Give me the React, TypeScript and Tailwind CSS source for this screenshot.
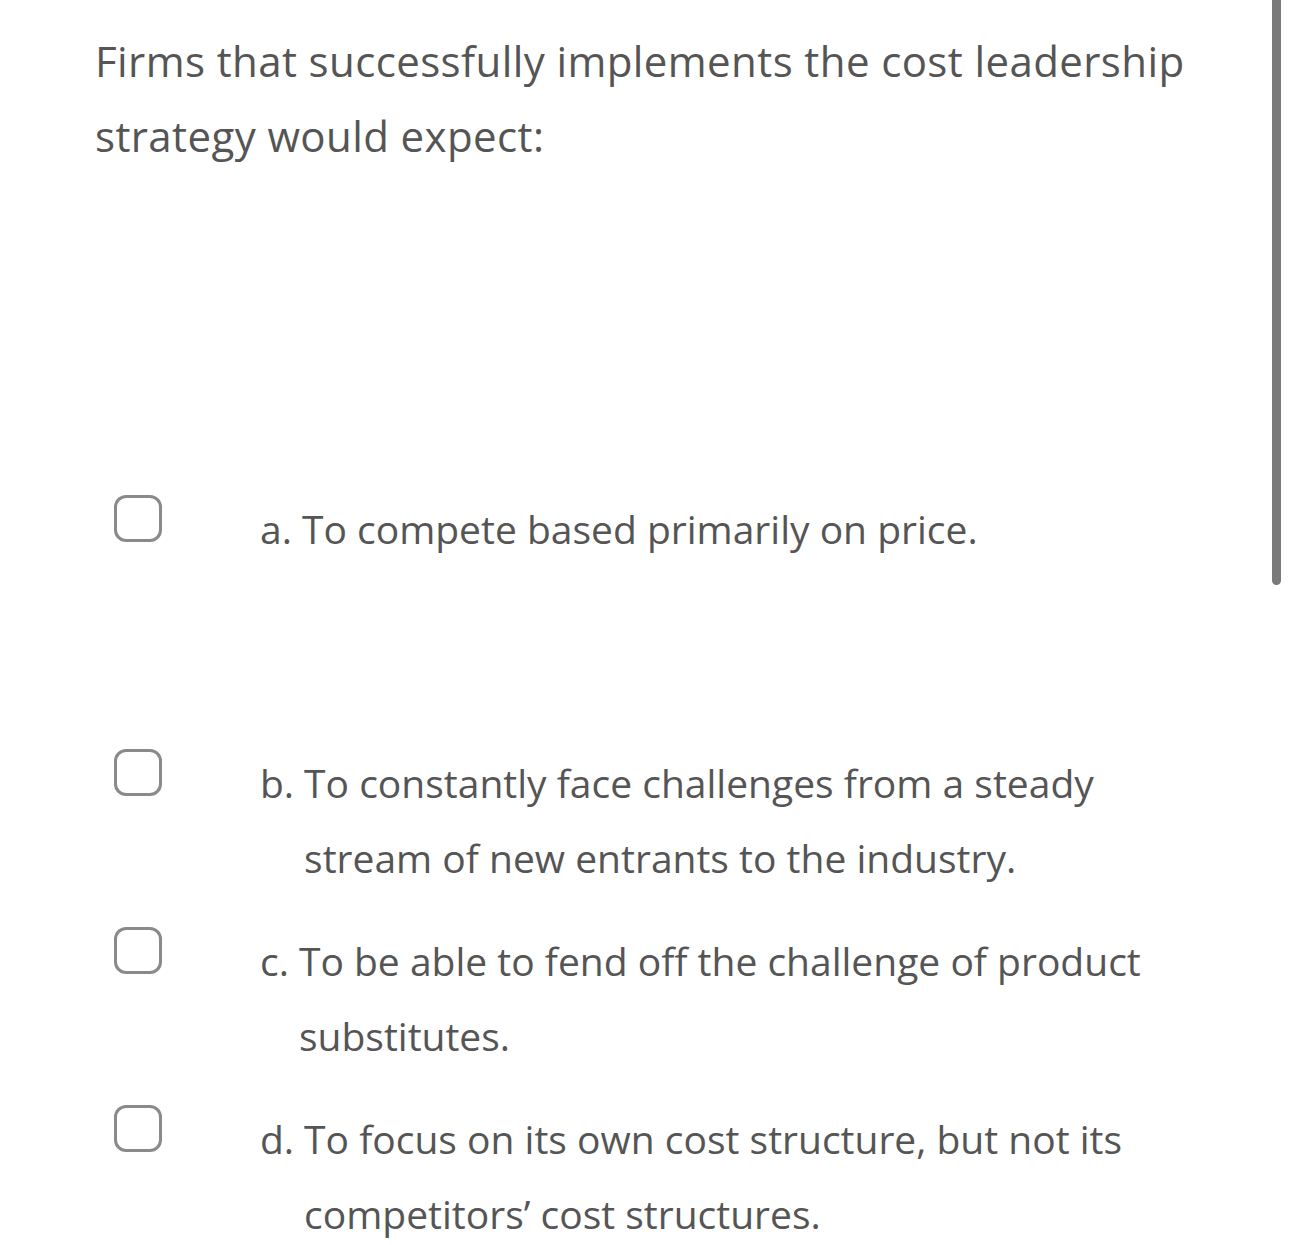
import React from "react";

const options = [
  { label: "a.", text: "To compete based primarily on price." },
  { label: "b.", text: "To constantly face challenges from a steady stream of new entrants to the industry." },
  { label: "c.", text: "To be able to fend off the challenge of product substitutes." },
  { label: "d.", text: "To focus on its own cost structure, but not its competitors’ cost structures." },
];

const Checkbox: React.FC = () => (
  <div className="mt-[4px] h-[47px] w-[48px] shrink-0 rounded-[12px] border-[3.5px] border-[#8a8a8c] bg-white" />
);

export default function App() {
  return (
    <div
      className="relative h-[1245px] w-[1290px] overflow-hidden bg-white text-[#555555]"
      style={{ fontFamily: '"Open Sans", "Liberation Sans", sans-serif' }}
    >
      {/* scrollbar */}
      <div className="absolute right-[9px] top-0 h-[585px] w-[9px] rounded-b-full bg-[#7a7a7a]" />

      <div className="pl-[95px] pr-[90px] pt-[23px]">
        <p className="text-[42px] leading-[75px] tracking-[0.4px]">
          Firms that successfully implements the cost leadership strategy would expect:
        </p>

        <div className="mt-[318px] flex flex-col">
          {options.map((o, i) => (
            <div
              key={o.label}
              className={`flex items-start pl-[19px] ${i === 1 ? "mt-[179px]" : i > 1 ? "mt-[28px]" : ""}`}
            >
              <Checkbox />
              <div className="ml-[98px] flex text-[39px] leading-[75px]">
                <span className="shrink-0 pr-[10px]">{o.label}</span>
                <span className="w-[850px]">{o.text}</span>
              </div>
            </div>
          ))}
        </div>
      </div>
    </div>
  );
}
